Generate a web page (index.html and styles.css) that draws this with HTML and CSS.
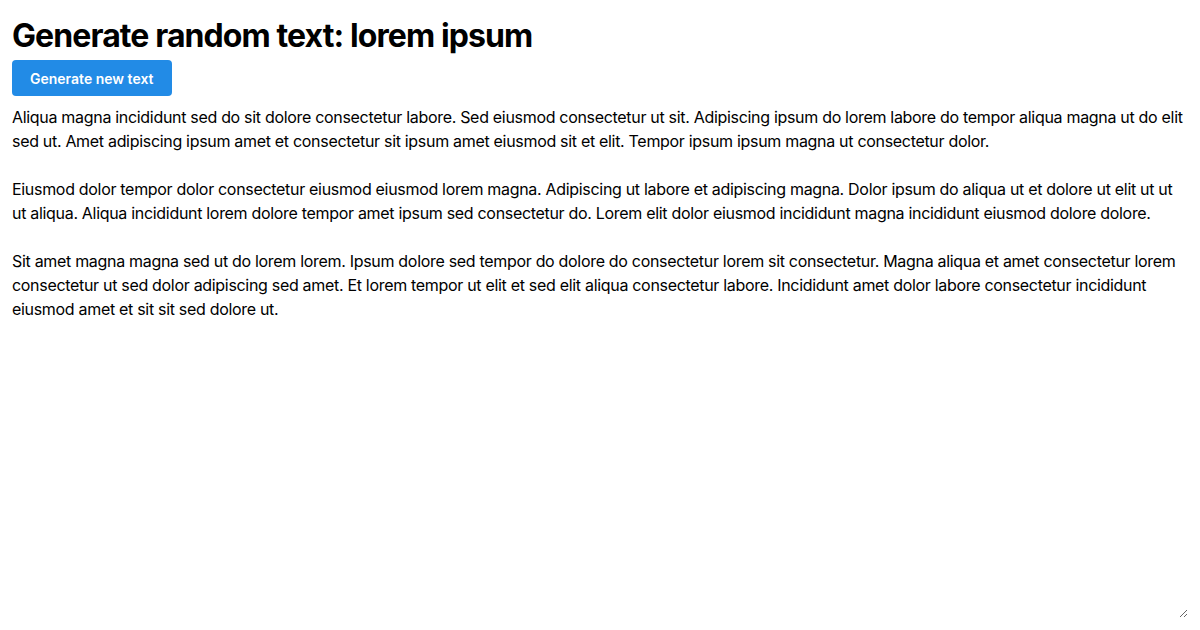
FILE: index.html
```html
<!DOCTYPE html>
<html lang="en">
<head>
    <meta charset="UTF-8">
    <meta name="viewport" content="width=device-width, initial-scale=1.0">
    <title>Lorem ipsum generator</title>
    <link rel="stylesheet" href="styles.css">
</head>
<body>
    <div class="pagina">
        <h1>Generate random text: lorem ipsum</h1>
        <button class="genera">Generate new text</button>
        <textarea class="testo" spellcheck="false">Aliqua magna incididunt sed do sit dolore consectetur labore. Sed eiusmod consectetur ut sit. Adipiscing ipsum do lorem labore do tempor aliqua magna ut do elit sed ut. Amet adipiscing ipsum amet et consectetur sit ipsum amet eiusmod sit et elit. Tempor ipsum ipsum magna ut consectetur dolor.

Eiusmod dolor tempor dolor consectetur eiusmod eiusmod lorem magna. Adipiscing ut labore et adipiscing magna. Dolor ipsum do aliqua ut et dolore ut elit ut ut ut aliqua. Aliqua incididunt lorem dolore tempor amet ipsum sed consectetur do. Lorem elit dolor eiusmod incididunt magna incididunt eiusmod dolore dolore.

Sit amet magna magna sed ut do lorem lorem. Ipsum dolore sed tempor do dolore do consectetur lorem sit consectetur. Magna aliqua et amet consectetur lorem consectetur ut sed dolor adipiscing sed amet. Et lorem tempor ut elit et sed elit aliqua consectetur labore. Incididunt amet dolor labore consectetur incididunt eiusmod amet et sit sit sed dolore ut.</textarea>
    </div>
</body>
</html>
```

FILE: styles.css
```css
* {
    box-sizing: border-box;
    margin: 0;
    padding: 0;
}

body {
    font-family: 'Inter', 'Liberation Sans', sans-serif;
    background: #fff;
    color: #000;
}

.pagina {
    display: flex;
    flex-direction: column;
    align-items: flex-start;
    padding: 12px;
    height: 100vh;
}

h1 {
    font-size: 32px;
    font-weight: 700;
    line-height: 48px;
    letter-spacing: -0.9px;
}

.genera {
    height: 36px;
    padding: 0 18px;
    font-family: inherit;
    font-size: 14px;
    font-weight: 600;
    color: #fff;
    background: #228be6;
    border: none;
    border-radius: 4px;
    cursor: pointer;
}

.genera:hover {
    background: #1c7ed6;
}

.testo {
    margin-top: 9px;
    width: 100%;
    flex: 1;
    font-family: inherit;
    font-size: 16px;
    line-height: 24px;
    letter-spacing: -0.31px;
    color: #000;
    border: none;
    outline: none;
    background: #fff;
}
```
